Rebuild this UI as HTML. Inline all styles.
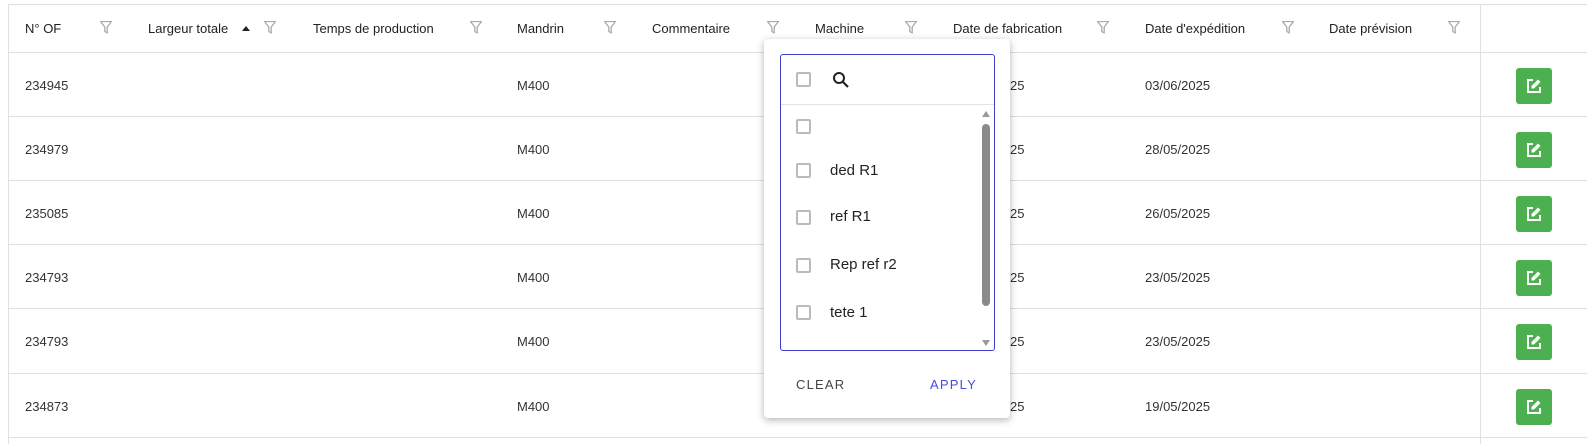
<!DOCTYPE html>
<html><head><meta charset="utf-8"><style>
body{margin:0;width:1587px;height:446px;background:#fff;font-family:"Liberation Sans",Arial,sans-serif;font-size:13px;color:#333;position:relative;overflow:hidden}
.a{position:absolute}
.h{position:absolute;top:21px;color:#222}
.f{position:absolute;top:21px;width:12px;height:13px}
.hl{position:absolute;left:8px;right:0;height:1px;background:#e0e0e0}
.c{position:absolute;color:#333}
.btn{position:absolute;left:1516px;width:36px;height:36px;background:#4caf50;border-radius:3px}
.btn svg{position:absolute;left:10px;top:10px}
.cb{position:absolute;left:796px;width:15px;height:15px;border:2px solid #bbb;border-radius:2px;box-sizing:border-box}
.it{position:absolute;left:830px;font-size:15px;color:#222}
</style></head><body>
<div class="hl" style="top:4px"></div>
<div class="a" style="left:8px;top:4px;width:1px;height:440px;background:#e0e0e0"></div>
<div class="a" style="left:1480px;top:4px;width:1px;height:440px;background:#e0e0e0"></div>
<div class="hl" style="top:52px"></div>
<div class="hl" style="top:116px"></div>
<div class="hl" style="top:180px"></div>
<div class="hl" style="top:244px"></div>
<div class="hl" style="top:308px"></div>
<div class="hl" style="top:373px"></div>
<div class="hl" style="top:437px"></div>

<div class="h" style="left:25px">N° OF</div>
<div class="h" style="left:148px">Largeur totale</div>
<div class="a" style="left:242px;top:26px;width:0;height:0;border-left:4px solid transparent;border-right:4px solid transparent;border-bottom:5px solid #222"></div>
<div class="h" style="left:313px">Temps de production</div>
<div class="h" style="left:517px">Mandrin</div>
<div class="h" style="left:652px">Commentaire</div>
<div class="h" style="left:815px">Machine</div>
<div class="h" style="left:953px">Date de fabrication</div>
<div class="h" style="left:1145px">Date d'expédition</div>
<div class="h" style="left:1329px">Date prévision</div>

<svg width="0" height="0" style="position:absolute"><defs><symbol id="fi" viewBox="0 0 12 13"><path d="M0.5 0.5H11.5L7.2 6V12L4.8 10.5V6Z" fill="none" stroke="#aaa" stroke-width="1.3" stroke-linejoin="round"/></symbol>
<symbol id="ed" viewBox="0 0 16 16"><path d="M7 2H2V14H14V9" fill="none" stroke="#fff" stroke-width="2"/><path d="M12 1.5L14.5 4L8 10.5H5.5V8Z" fill="#fff"/></symbol></defs></svg>
<svg class="f" style="left:100px"><use href="#fi"/></svg>
<svg class="f" style="left:264px"><use href="#fi"/></svg>
<svg class="f" style="left:470px"><use href="#fi"/></svg>
<svg class="f" style="left:604px"><use href="#fi"/></svg>
<svg class="f" style="left:767px"><use href="#fi"/></svg>
<svg class="f" style="left:905px"><use href="#fi"/></svg>
<svg class="f" style="left:1097px"><use href="#fi"/></svg>
<svg class="f" style="left:1282px"><use href="#fi"/></svg>
<svg class="f" style="left:1448px"><use href="#fi"/></svg>

<div class="c" style="left:25px;top:78px">234945</div><div class="c" style="left:517px;top:78px">M400</div><div class="c" style="left:1010px;top:78px">25</div><div class="c" style="left:1145px;top:78px">03/06/2025</div>
<div class="c" style="left:25px;top:142px">234979</div><div class="c" style="left:517px;top:142px">M400</div><div class="c" style="left:1010px;top:142px">25</div><div class="c" style="left:1145px;top:142px">28/05/2025</div>
<div class="c" style="left:25px;top:206px">235085</div><div class="c" style="left:517px;top:206px">M400</div><div class="c" style="left:1010px;top:206px">25</div><div class="c" style="left:1145px;top:206px">26/05/2025</div>
<div class="c" style="left:25px;top:270px">234793</div><div class="c" style="left:517px;top:270px">M400</div><div class="c" style="left:1010px;top:270px">25</div><div class="c" style="left:1145px;top:270px">23/05/2025</div>
<div class="c" style="left:25px;top:334px">234793</div><div class="c" style="left:517px;top:334px">M400</div><div class="c" style="left:1010px;top:334px">25</div><div class="c" style="left:1145px;top:334px">23/05/2025</div>
<div class="c" style="left:25px;top:399px">234873</div><div class="c" style="left:517px;top:399px">M400</div><div class="c" style="left:1010px;top:399px">25</div><div class="c" style="left:1145px;top:399px">19/05/2025</div>

<div class="btn" style="top:68px"><svg width="16" height="16"><use href="#ed"/></svg></div>
<div class="btn" style="top:132px"><svg width="16" height="16"><use href="#ed"/></svg></div>
<div class="btn" style="top:196px"><svg width="16" height="16"><use href="#ed"/></svg></div>
<div class="btn" style="top:260px"><svg width="16" height="16"><use href="#ed"/></svg></div>
<div class="btn" style="top:324px"><svg width="16" height="16"><use href="#ed"/></svg></div>
<div class="btn" style="top:389px"><svg width="16" height="16"><use href="#ed"/></svg></div>

<div class="a" style="left:764px;top:39px;width:246px;height:379px;background:#fff;border-radius:4px;box-shadow:0 2px 8px rgba(0,0,0,.3)"></div>
<div class="a" style="left:780px;top:54px;width:215px;height:297px;border:1.5px solid #4040cc;border-radius:3px;box-sizing:border-box"></div>
<div class="a" style="left:781px;top:104px;width:213px;height:1px;background:#e4e4e4"></div>
<div class="cb" style="top:72px"></div>
<svg class="a" style="left:832px;top:71px" width="18" height="18" viewBox="0 0 18 18"><circle cx="7" cy="7" r="5" fill="none" stroke="#222" stroke-width="2"/><path d="M10.5 10.5L16 16" stroke="#222" stroke-width="2.2"/></svg>
<div class="cb" style="top:119px"></div>
<div class="cb" style="top:163px"></div><div class="it" style="top:162px">ded R1</div>
<div class="cb" style="top:210px"></div><div class="it" style="top:208px">ref R1</div>
<div class="cb" style="top:258px"></div><div class="it" style="top:256px">Rep ref r2</div>
<div class="cb" style="top:305px"></div><div class="it" style="top:304px">tete 1</div>
<div class="a" style="left:982px;top:111px;width:0;height:0;border-left:4px solid transparent;border-right:4px solid transparent;border-bottom:6px solid #999"></div>
<div class="a" style="left:982px;top:124px;width:8px;height:182px;background:#8a8a8a;border-radius:4px"></div>
<div class="a" style="left:982px;top:340px;width:0;height:0;border-left:4px solid transparent;border-right:4px solid transparent;border-top:6px solid #999"></div>
<div class="a" style="left:796px;top:377px;font-size:13px;letter-spacing:1.2px;color:#444">CLEAR</div>
<div class="a" style="left:930px;top:377px;font-size:13px;letter-spacing:1.2px;color:#4a4ae0">APPLY</div>
</body></html>
